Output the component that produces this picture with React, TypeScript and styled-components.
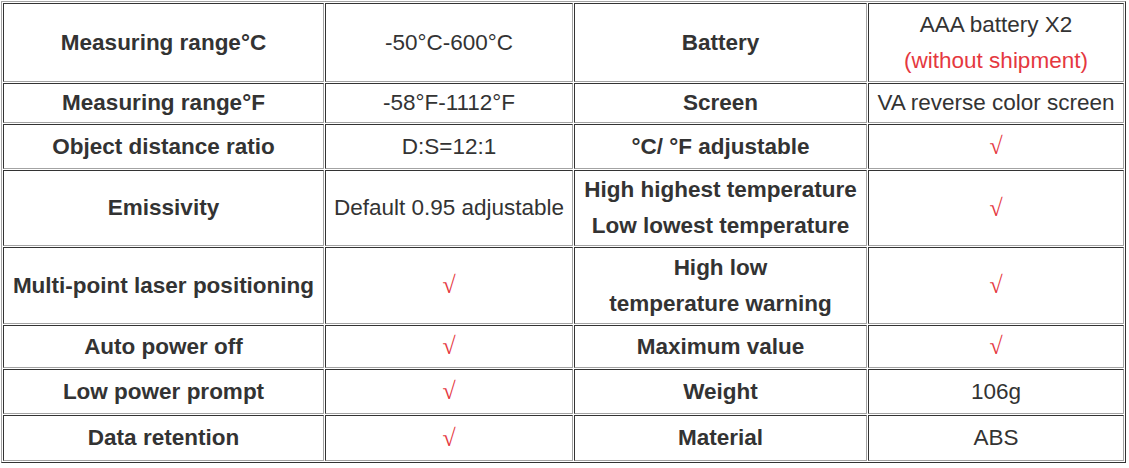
import styled, { createGlobalStyle } from "styled-components";

const GlobalStyle = createGlobalStyle`
  html, body {
    margin: 0;
    padding: 0;
    background: #fff;
  }
  body {
    font-family: "Liberation Sans", Arial, sans-serif;
  }
`;

const STable = styled.table`
  margin: 1px 0 0 1px;
  width: 1125px;
  table-layout: fixed;
  border-collapse: separate;
  border-spacing: 1px;
  border: 1px solid;
  border-color: #a3a3a3 #333 #333 #a3a3a3;
  color: #333;
  font-size: 22.5px;
  line-height: 36px;
`;

const SRow = styled.tr<{ $h: number }>`
  height: ${({ $h }) => $h}px;
`;

const SCell = styled.td<{ $bold?: boolean }>`
  padding: 0;
  text-align: center;
  vertical-align: middle;
  border: 1px solid;
  border-color: #333 #a3a3a3 #a3a3a3 #333;
  font-weight: ${({ $bold }) => ($bold ? 700 : 400)};
`;

const SRed = styled.span`
  color: #e5383f;
`;

const SCheck = styled.span`
  color: #e5383f;
  font-family: "Liberation Serif", serif;
  font-size: 24px;
`;

type Value = string | "check";

interface IRow {
  h: number;
  label1: React.ReactNode;
  value1: Value;
  label2: React.ReactNode;
  value2: React.ReactNode;
}

const check = <SCheck>√</SCheck>;

const rows: IRow[] = [
  {
    h: 79,
    label1: "Measuring range°C",
    value1: "-50°C-600°C",
    label2: "Battery",
    value2: (
      <>
        AAA battery X2
        <br />
        <SRed>(without shipment)</SRed>
      </>
    ),
  },
  {
    h: 40,
    label1: "Measuring range°F",
    value1: "-58°F-1112°F",
    label2: "Screen",
    value2: "VA reverse color screen",
  },
  {
    h: 45,
    label1: "Object distance ratio",
    value1: "D:S=12:1",
    label2: "°C/ °F adjustable",
    value2: check,
  },
  {
    h: 76,
    label1: "Emissivity",
    value1: "Default 0.95 adjustable",
    label2: (
      <>
        High highest temperature
        <br />
        Low lowest temperature
      </>
    ),
    value2: check,
  },
  {
    h: 77,
    label1: "Multi-point laser positioning",
    value1: "check",
    label2: (
      <>
        High low
        <br />
        temperature warning
      </>
    ),
    value2: check,
  },
  {
    h: 43,
    label1: "Auto power off",
    value1: "check",
    label2: "Maximum value",
    value2: check,
  },
  {
    h: 45,
    label1: "Low power prompt",
    value1: "check",
    label2: "Weight",
    value2: "106g",
  },
  {
    h: 46,
    label1: "Data retention",
    value1: "check",
    label2: "Material",
    value2: "ABS",
  },
];

const App = () => {
  return (
    <>
      <GlobalStyle />
      <STable>
        <colgroup>
          <col style={{ width: 321 }} />
          <col style={{ width: 248 }} />
          <col style={{ width: 293 }} />
          <col style={{ width: 256 }} />
        </colgroup>
        <tbody>
          {rows.map((r, i) => (
            <SRow key={i} $h={r.h}>
              <SCell $bold>{r.label1}</SCell>
              <SCell>{r.value1 === "check" ? check : r.value1}</SCell>
              <SCell $bold>{r.label2}</SCell>
              <SCell>{r.value2}</SCell>
            </SRow>
          ))}
        </tbody>
      </STable>
    </>
  );
};

export default App;
